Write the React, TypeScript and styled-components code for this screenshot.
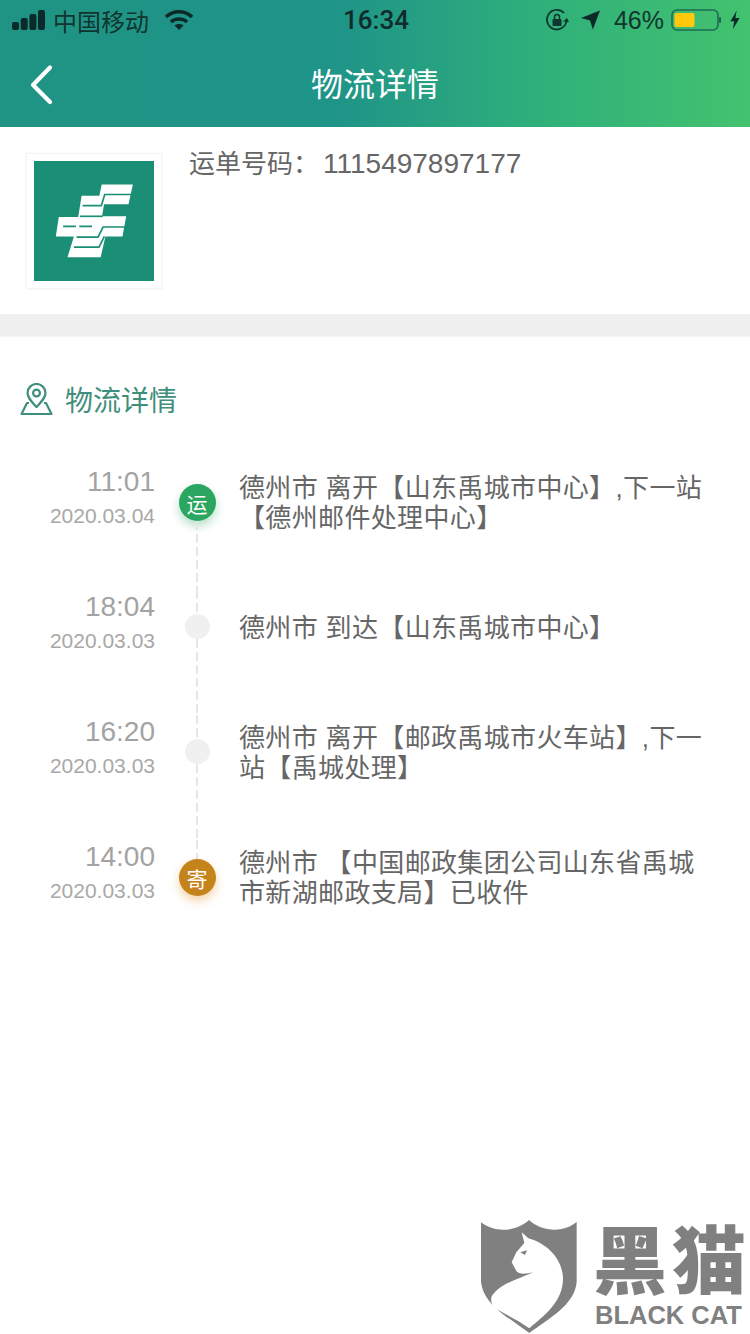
import styled, { createGlobalStyle } from "styled-components";

const GlobalStyle = createGlobalStyle`
  html, body {
    margin: 0;
    padding: 0;
    background: #fff;
  }
  * {
    box-sizing: border-box;
  }
`;

const CJK = `"Liberation Sans", "Noto Sans CJK SC", sans-serif`;

const Page = styled.div`
  position: relative;
  width: 750px;
  height: 1334px;
  overflow: hidden;
  background: #fff;
  font-family: ${CJK};
`;

const Header = styled.header`
  height: 127px;
  background: linear-gradient(90deg, #1f9484 0%, #1f9488 45%, #2fb07a 72%, #43c26f 100%);
`;

const StatusBar = styled.div`
  height: 40px;
  padding: 0 10px 0 12px;
  display: grid;
  grid-template-columns: 1fr auto 1fr;
  align-items: center;
  color: #10352f;
`;

const StatusLeft = styled.div`
  display: flex;
  align-items: center;
  gap: 8px;
`;

const Carrier = styled.span`
  font-size: 24px;
`;

const Clock = styled.span`
  font-family: Roboto, sans-serif;
  font-size: 26px;
  font-weight: 500;
  color: #0f2c2c;
`;

const StatusRight = styled.div`
  display: flex;
  align-items: center;
  justify-content: flex-end;
  gap: 12px;
`;

const Percent = styled.span`
  font-size: 25px;
  margin-left: 2px;
  margin-right: -5px;
`;

const NavBar = styled.div`
  position: relative;
  height: 87px;
  display: flex;
  align-items: center;
  justify-content: center;
  padding-bottom: 3px;
`;

const NavTitle = styled.h1`
  margin: 0;
  color: #fff;
  font-size: 32px;
  font-weight: 400;
`;

const BackButton = styled.button`
  position: absolute;
  left: 28px;
  top: 24px;
  width: 28px;
  height: 42px;
  padding: 0;
  border: 0;
  background: none;
  display: flex;
`;

const InfoCard = styled.section`
  height: 187px;
  padding: 26px 0 0 26px;
  display: flex;
  gap: 27px;
  background: #fff;
`;

const LogoFrame = styled.div`
  width: 136px;
  height: 136px;
  padding: 7px;
  background: #fff;
  border: 1px solid #f3f3f3;
  box-shadow: 0 0 3px rgba(0, 0, 0, 0.05);
`;

const TrackingNo = styled.p`
  margin: -4px 0 0;
  font-size: 26px;
  line-height: 30px;
  color: #666;
`;

const TrackingDigits = styled.span`
  font-size: 28px;
  margin-left: 4px;
`;

const Band = styled.div`
  height: 23px;
  background: #f0f0f0;
  border-bottom: 1px solid #f6f6f6;
`;

const SectionTitle = styled.h2`
  margin: 0;
  padding: 46px 0 0 20px;
  height: 128px;
  display: flex;
  align-items: flex-start;
  gap: 12px;
  font-size: 28px;
  line-height: 37px;
  font-weight: 400;
  color: #3f8f7c;
`;

const Timeline = styled.ol`
  margin: 0;
  padding: 0;
  list-style: none;
`;

const Row = styled.li`
  height: 125px;
  display: grid;
  grid-template-columns: 155px 84px 1fr;
`;

const When = styled.div`
  text-align: right;
`;

const Time = styled.div`
  font-size: 28px;
  line-height: 34px;
  color: #a3a3a3;
`;

const DateText = styled.div`
  font-size: 21px;
  line-height: 34px;
  color: #a8a8a8;
`;

const Rail = styled.div`
  display: flex;
  flex-direction: column;
  align-items: center;
`;

const Dash = styled.div<{ $h?: number; $hidden?: boolean }>`
  ${(p) => (p.$h !== undefined ? `height: ${p.$h}px;` : "flex: 1;")}
  width: 2px;
  background: ${(p) =>
    p.$hidden ? "transparent" : "repeating-linear-gradient(180deg, #e6e6e6 0 9px, transparent 9px 13px)"};
`;

const Dot = styled.div<{ $color?: string; $glow?: string }>`
  flex: none;
  width: ${(p) => (p.$color ? 37 : 25)}px;
  height: ${(p) => (p.$color ? 37 : 25)}px;
  border-radius: 50%;
  display: flex;
  align-items: center;
  justify-content: center;
  font-size: 21px;
  color: #fff;
  background: ${(p) => p.$color ?? "#f0f0f0"};
  box-shadow: ${(p) => (p.$glow ? `0 5px 10px ${p.$glow}` : "none")};
`;

const Message = styled.div`
  height: 76px;
  padding-right: 36px;
  display: flex;
  align-items: center;
  font-size: 26px;
  letter-spacing: 0.35px;
  line-height: 30px;
  color: #666;
`;

const Watermark = styled.div`
  position: absolute;
  left: 475px;
  top: 1215px;
  display: flex;
  gap: 10px;
  color: #808080;
`;

const WatermarkText = styled.div`
  display: flex;
  flex-direction: column;
`;

const WatermarkCn = styled.div`
  font-size: 74px;
  line-height: 74px;
  font-weight: 900;
  letter-spacing: 5px;
  margin: 11px 0 0 -2px;
  white-space: nowrap;
`;

const WatermarkEn = styled.div`
  font-weight: 700;
  font-size: 25.5px;
  line-height: 30px;
  white-space: nowrap;
`;

const WifiSvg = styled.svg`
  margin-left: 7px;
`;

const BoltSvg = styled.svg`
  margin-left: -3px;
`;

const LogoSvg = styled.svg`
  display: block;
`;

const SignalIcon = () => (
  <svg width="33" height="20" viewBox="0 0 33 20" fill="#0d2a2a">
    <rect x="0" y="12" width="7" height="8" rx="2" />
    <rect x="8.7" y="8" width="7" height="12" rx="2" />
    <rect x="17.4" y="4" width="7" height="16" rx="2" />
    <rect x="26" y="0" width="7" height="20" rx="2" />
  </svg>
);

const WifiIcon = () => (
  <WifiSvg width="30" height="22" viewBox="0 0 30 22" fill="none" stroke="#0d2a2a" strokeWidth="3.6">
    <path d="M2 8 C9 1 21 1 28 8" />
    <path d="M7 13 C11 9 19 9 23 13" />
    <path d="M15 21 L10.5 16.5 C13 14.5 17 14.5 19.5 16.5 Z" fill="#0d2a2a" stroke="none" />
  </WifiSvg>
);

const RotationLockIcon = () => (
  <svg width="24" height="24" viewBox="0 0 24 24" fill="none" stroke="#10352f" strokeWidth="1.8">
    <path d="M21.5 13 A9.8 9.8 0 1 1 19 5" />
    <path d="M22 10 L18 13.5 L24 14 Z" fill="#10352f" stroke="none" />
    <rect x="7.5" y="11" width="9" height="7" rx="1" fill="#10352f" stroke="none" />
    <path d="M9.5 11 V9 a2.5 2.5 0 0 1 5 0 V11" strokeWidth="1.5" />
  </svg>
);

const LocationIcon = () => (
  <svg width="19" height="20" viewBox="0 0 20 20" fill="#0d2a2a">
    <path d="M20 0 L12.5 20 L9.5 10.5 L0 8 Z" />
  </svg>
);

const BatteryIcon = () => (
  <svg width="50" height="24" viewBox="0 0 50 24">
    <rect x="1" y="2" width="46" height="20" rx="5" fill="none" stroke="#1f6b52" strokeWidth="1.6" />
    <rect x="3.5" y="5" width="20" height="14" rx="2" fill="#ffc80c" />
    <rect x="48" y="9" width="2" height="6" rx="1" fill="#1f6b52" />
  </svg>
);

const BoltIcon = () => (
  <BoltSvg width="10" height="22" viewBox="0 0 12 22" fill="#0d2a2a">
    <path d="M8 0 L0.5 12.5 H5 L3.5 22 L11.5 8.5 H6.5 Z" />
  </BoltSvg>
);

const BackIcon = () => (
  <svg width="28" height="42" viewBox="0 0 28 42" fill="none" stroke="#fff" strokeWidth="4.2" strokeLinecap="round" strokeLinejoin="round">
    <path d="M22 3.5 L5 21 L22 38" />
  </svg>
);

const PostLogo = () => (
  <LogoSvg width="120" height="120" viewBox="103 93 358 358">
    <rect x="103" y="93" width="358" height="358" fill="#1a8f76" />
    <path
      d="M305 163 H398 L385 222 H312 L306 258 H378 L367 318 H316 L302 380 H203 L222 318 H168 L177 260 H235 L245 197 H298 Z"
      fill="#fff"
    />
    <g fill="none" stroke="#1a8f76" strokeWidth="5">
      <path d="M248 226 H304 L314 193 H398" />
      <path d="M240 258 H308" />
      <path d="M190 288 H228 M238 288 H276" />
      <path d="M230 320 H294 L309 290 H378" />
      <path d="M222 350 H297 L313 318" />
    </g>
  </LogoSvg>
);

const PinIcon = () => (
  <svg width="33" height="33" viewBox="0 0 33 33" fill="none" stroke="#3f8f7c" strokeWidth="2.2" strokeLinejoin="round">
    <path d="M16.5 24 C11 18 7.5 14.5 7.5 10 A9 9 0 0 1 25.5 10 C25.5 14.5 22 18 16.5 24 Z" />
    <circle cx="16.5" cy="10" r="3.4" />
    <path d="M9 20 H7 L1.5 31 H31.5 L26 20 H24" />
  </svg>
);

const CatShield = () => (
  <svg width="110" height="119" viewBox="0 0 330 357">
    <path
      d="M18 22 C60 55 125 50 162 15 C200 50 265 55 305 20 V200 C300 270 220 310 163 354 C105 310 25 270 18 200 Z"
      fill="#808080"
    />
    <path
      d="M140 52 L160 70 C215 85 262 130 264 190 C264 260 210 300 163 340 C130 315 85 295 60 280 C50 270 46 258 50 244 C75 205 125 195 175 172 C150 178 132 178 124 168 L110 142 L124 112 L148 84 Z"
      fill="#fff"
    />
    <path d="M136 112 L156 106 L150 120 Z" fill="#808080" />
  </svg>
);

type Stop = {
  time: string;
  date: string;
  text: string;
  badge?: string;
  color?: string;
  glow?: string;
};

const stops: Stop[] = [
  { time: "11:01", date: "2020.03.04", text: "德州市 离开【山东禹城市中心】,下一站【德州邮件处理中心】", badge: "运", color: "#2ba660", glow: "rgba(43,166,96,0.35)" },
  { time: "18:04", date: "2020.03.03", text: "德州市 到达【山东禹城市中心】" },
  { time: "16:20", date: "2020.03.03", text: "德州市 离开【邮政禹城市火车站】,下一站【禹城处理】" },
  { time: "14:00", date: "2020.03.03", text: "德州市 【中国邮政集团公司山东省禹城市新湖邮政支局】已收件", badge: "寄", color: "#c5831c", glow: "rgba(224,150,40,0.4)" },
];

export default function App() {
  return (
    <Page>
      <GlobalStyle />
      <Header>
        <StatusBar>
          <StatusLeft>
            <SignalIcon />
            <Carrier>中国移动</Carrier>
            <WifiIcon />
          </StatusLeft>
          <Clock>16:34</Clock>
          <StatusRight>
            <RotationLockIcon />
            <LocationIcon />
            <Percent>46%</Percent>
            <BatteryIcon />
            <BoltIcon />
          </StatusRight>
        </StatusBar>
        <NavBar>
          <BackButton aria-label="返回">
            <BackIcon />
          </BackButton>
          <NavTitle>物流详情</NavTitle>
        </NavBar>
      </Header>

      <InfoCard>
        <LogoFrame>
          <PostLogo />
        </LogoFrame>
        <TrackingNo>
          运单号码：<TrackingDigits>1115497897177</TrackingDigits>
        </TrackingNo>
      </InfoCard>
      <Band />

      <SectionTitle>
        <PinIcon />
        物流详情
      </SectionTitle>

      <Timeline>
        {stops.map((stop, i) => (
          <Row key={stop.time}>
            <When>
              <Time>{stop.time}</Time>
              <DateText>{stop.date}</DateText>
            </When>
            <Rail>
              <Dash $h={stop.badge ? 19 : 24} $hidden={i === 0} />
              <Dot $color={stop.color} $glow={stop.glow}>
                {stop.badge}
              </Dot>
              {i < stops.length - 1 && <Dash />}
            </Rail>
            <Message>
              <span>{stop.text}</span>
            </Message>
          </Row>
        ))}
      </Timeline>

      <Watermark>
        <CatShield />
        <WatermarkText>
          <WatermarkCn>黑猫</WatermarkCn>
          <WatermarkEn>BLACK CAT</WatermarkEn>
        </WatermarkText>
      </Watermark>
    </Page>
  );
}
